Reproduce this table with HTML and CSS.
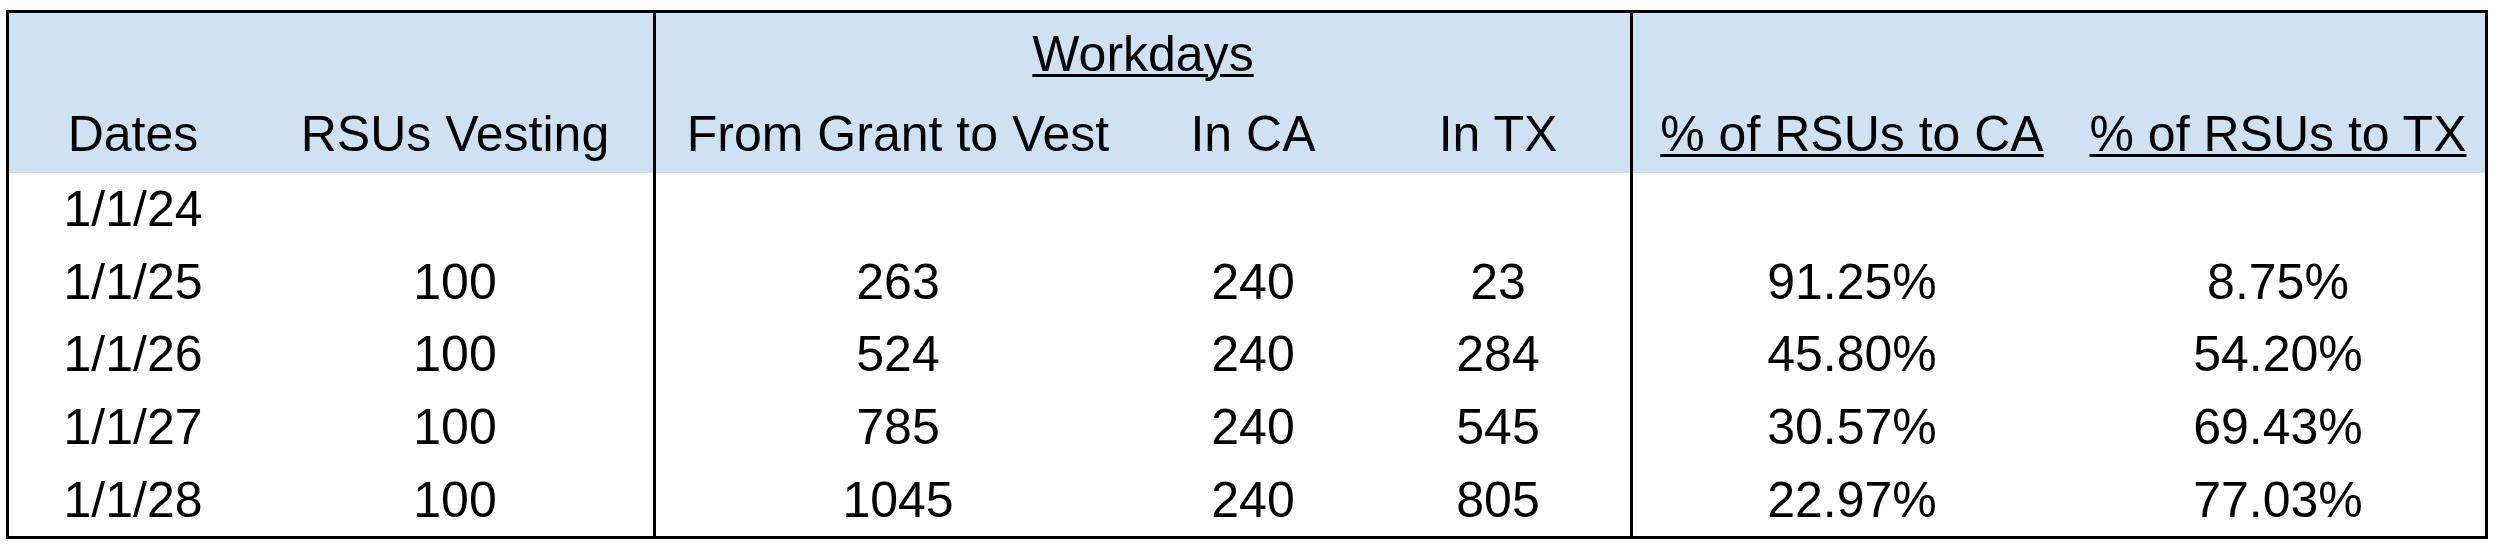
FILE: index.html
```html
<!DOCTYPE html>
<html lang="en">
<head>
<meta charset="utf-8">
<title>RSU Vesting Workdays</title>
<link rel="stylesheet" href="styles.css">
</head>
<body>
<div class="sheet">
  <div class="cell head span-a"></div>
  <div class="cell head span-b div"><span class="u">Workdays</span></div>
  <div class="cell head span-c div"></div>

  <div class="cell head">Dates</div>
  <div class="cell head">RSUs Vesting</div>
  <div class="cell head div">From Grant to Vest</div>
  <div class="cell head">In CA</div>
  <div class="cell head">In TX</div>
  <div class="cell head div"><span class="u">% of RSUs to CA</span></div>
  <div class="cell head"><span class="u">% of RSUs to TX</span></div>

  <div class="cell">1/1/24</div><div class="cell"></div><div class="cell div"></div><div class="cell"></div><div class="cell"></div><div class="cell div"></div><div class="cell"></div>

  <div class="cell">1/1/25</div><div class="cell">100</div><div class="cell div">263</div><div class="cell">240</div><div class="cell">23</div><div class="cell div">91.25%</div><div class="cell">8.75%</div>

  <div class="cell">1/1/26</div><div class="cell">100</div><div class="cell div">524</div><div class="cell">240</div><div class="cell">284</div><div class="cell div">45.80%</div><div class="cell">54.20%</div>

  <div class="cell">1/1/27</div><div class="cell">100</div><div class="cell div">785</div><div class="cell">240</div><div class="cell">545</div><div class="cell div">30.57%</div><div class="cell">69.43%</div>

  <div class="cell">1/1/28</div><div class="cell">100</div><div class="cell div">1045</div><div class="cell">240</div><div class="cell">805</div><div class="cell div">22.97%</div><div class="cell">77.03%</div>
</div>
</body>
</html>
```
FILE: styles.css
```css
html, body {
  margin: 0;
  padding: 0;
  background: #ffffff;
}

body {
  font-family: "Liberation Sans", Arial, sans-serif;
  color: #000000;
}

.sheet {
  box-sizing: border-box;
  width: 2482px;
  margin: 10px 0 0 6px;
  border: 3px solid #000000;
  display: grid;
  grid-template-columns: 248px 396px 487px 226px 264px 441px 414px;
  grid-template-rows: 81px 79px repeat(5, 72.6px);
}

.cell {
  box-sizing: border-box;
  display: flex;
  align-items: center;
  justify-content: center;
  font-size: 50px;
  line-height: 50px;
  white-space: nowrap;
}

.head {
  background: #cfe2f3;
}

.span-a { grid-column: 1 / span 2; }
.span-b { grid-column: 3 / span 3; }
.span-c { grid-column: 6 / span 2; }

.div {
  border-left: 3px solid #000000;
}

.u {
  text-decoration: underline;
  text-decoration-thickness: 3px;
  text-underline-offset: 3px;
}
```
